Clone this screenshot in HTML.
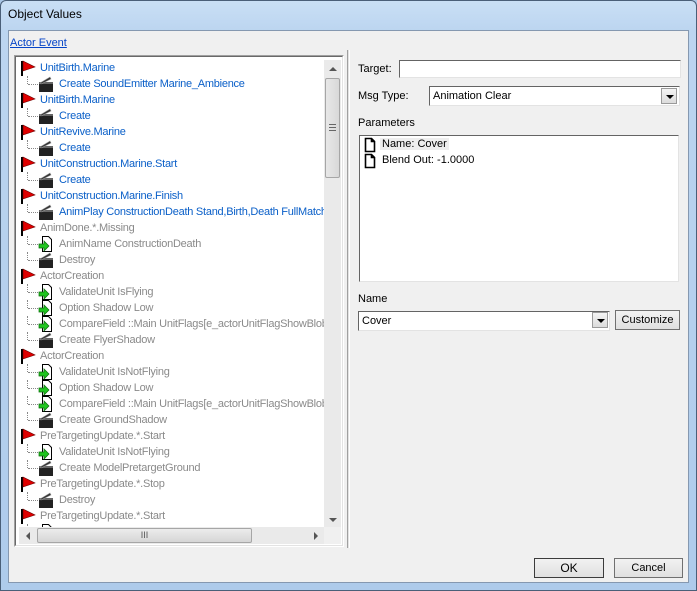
<!DOCTYPE html>
<html><head><meta charset="utf-8"><style>
*{box-sizing:border-box;margin:0;padding:0}
body{width:697px;height:591px;overflow:hidden;font-family:"Liberation Sans",sans-serif;font-size:11px;background:#a9c6e6;position:relative}
.abs{position:absolute}
#frame{left:0;top:0;width:697px;height:591px;border-radius:6px 6px 0 0;background:linear-gradient(#c9dff5,#bcd5f0 30px,#aecbeb);border:1px solid #4a5f78}
#client{left:8px;top:30px;width:681px;height:553px;background:#f0f0f0;border:1px solid #8598b0}
.lbl{color:#000;font-size:11px}
.row{position:absolute;left:0;height:16px;line-height:16px;white-space:nowrap;letter-spacing:-0.25px}
.b{color:#0a5fc8}.g{color:#8a8a8a}
.dv{position:absolute;border-left:1px dotted #888}
.dh{position:absolute;border-top:1px dotted #888}
.btn{position:absolute;background:linear-gradient(#f2f2f2,#e0e0e0);border:1px solid #707070;text-align:center;font-size:12px}
.dd{position:absolute;width:16px;height:16px;background:linear-gradient(#f4f4f4,#dcdcdc);border:1px solid #9a9a9a}
.dd:after{content:"";position:absolute;left:4px;top:6px;border-left:4px solid transparent;border-right:4px solid transparent;border-top:4px solid #000}
</style></head><body>
<div id="frame" class="abs"></div>
<div class="abs" style="left:8px;top:7px;font-size:12px;color:#000">Object Values</div>
<div id="client" class="abs"></div>
<div class="abs" style="left:10px;top:37px;color:#0645c8;text-decoration:underline">Actor Event</div>

<div class="abs" style="left:14px;top:55px;width:330px;height:492px;border:1px solid;border-color:#a0a0a0 #fff #fff #a0a0a0"></div>
<div class="abs" style="left:15px;top:56px;width:328px;height:490px;border:1px solid;border-color:#696969 #e3e3e3 #e3e3e3 #696969;background:#fff;overflow:hidden">
<div class="abs" style="left:4px;top:3px;width:304px;height:467px;overflow:hidden" id="tree"></div>
<div class="abs" style="left:308px;top:3px;width:17px;height:467px;background:#eaeaea"></div>
<div class="abs" style="left:313px;top:10px;border-left:4px solid transparent;border-right:4px solid transparent;border-bottom:4px solid #555"></div>
<div class="abs" style="left:309px;top:21px;width:15px;height:100px;background:linear-gradient(90deg,#e8e8e8,#d8d8d8);border:1px solid #a6a6a6;border-radius:2px"></div>
<div class="abs" style="left:313px;top:67px;width:7px;height:7px;border-top:1px solid #666;border-bottom:1px solid #666"><div style="margin-top:2px;border-top:1px solid #666"></div></div>
<div class="abs" style="left:313px;top:461px;border-left:4px solid transparent;border-right:4px solid transparent;border-top:4px solid #555"></div>
<div class="abs" style="left:3px;top:470px;width:305px;height:17px;background:#eaeaea"></div>
<div class="abs" style="left:10px;top:475px;border-top:4px solid transparent;border-bottom:4px solid transparent;border-right:4px solid #555"></div>
<div class="abs" style="left:21px;top:471px;width:215px;height:15px;background:linear-gradient(#ececec,#d6d6d6);border:1px solid #a6a6a6;border-radius:2px;text-align:center;line-height:12px;font-size:9px;color:#555">III</div>
<div class="abs" style="left:298px;top:475px;border-top:4px solid transparent;border-bottom:4px solid transparent;border-left:4px solid #555"></div>
<div class="abs" style="left:308px;top:470px;width:17px;height:17px;background:#f0f0f0"></div>
</div>
<div class="abs" style="left:347px;top:50px;width:3px;height:498px;border-left:1px solid #a0a0a0;border-right:1px solid #fff;background:#e3e3e3"></div>

<div class="abs lbl" style="left:358px;top:63px">Target:</div>
<div class="abs" style="left:399px;top:60px;width:282px;height:18px;background:#fff;border:1px solid;border-color:#646464 #e3e3e3 #e3e3e3 #646464"></div>
<div class="abs lbl" style="left:358px;top:90px">Msg Type:</div>
<div class="abs" style="left:429px;top:86px;width:251px;height:20px;background:#fff;border:1px solid;border-color:#646464 #e3e3e3 #e3e3e3 #646464;padding:3px 3px">Animation Clear</div>
<div class="dd" style="left:661px;top:88px"></div>
<div class="abs lbl" style="left:358px;top:117px">Parameters</div>
<div class="abs" style="left:359px;top:135px;width:320px;height:147px;background:#fff;border:1px solid;border-color:#646464 #e3e3e3 #e3e3e3 #646464"></div>
<svg class="abs" style="left:363px;top:137px" width="14" height="32"><path d="M2.5 1.5h6l3 3v10h-9z M8.5 1.5v3h3" fill="#fff" stroke="#000" stroke-width="1.6"/><path d="M2.5 17.5h6l3 3v10h-9z M8.5 17.5v3h3" fill="#fff" stroke="#000" stroke-width="1.6"/></svg>
<div class="abs" style="left:380px;top:138px;padding:0 2px;background:#eee">Name: Cover</div>
<div class="abs" style="left:382px;top:154px">Blend Out: -1.0000</div>
<div class="abs lbl" style="left:358px;top:293px">Name</div>
<div class="abs" style="left:358px;top:311px;width:252px;height:20px;background:#fff;border:1px solid;border-color:#646464 #e3e3e3 #e3e3e3 #646464;padding:3px 3px">Cover</div>
<div class="dd" style="left:592px;top:312px"></div>
<div class="btn" style="left:615px;top:310px;width:65px;height:20px;line-height:18px;font-size:11px">Customize</div>
<div class="btn" style="left:534px;top:558px;width:70px;height:20px;line-height:18px;border-color:#3c3c3c">OK</div>
<div class="btn" style="left:614px;top:558px;width:69px;height:20px;line-height:18px;font-size:11px">Cancel</div>

<script>
var rows=[
['F','UnitBirth.Marine','b'],['C','Create SoundEmitter Marine_Ambience','b'],
['F','UnitBirth.Marine','b'],['C','Create','b'],
['F','UnitRevive.Marine','b'],['C','Create','b'],
['F','UnitConstruction.Marine.Start','b'],['C','Create','b'],
['F','UnitConstruction.Marine.Finish','b'],['C','AnimPlay ConstructionDeath Stand,Birth,Death FullMatch','b'],
['F','AnimDone.*.Missing','g'],['G','AnimName ConstructionDeath','g'],['C','Destroy','g'],
['F','ActorCreation','g'],['G','ValidateUnit IsFlying','g'],['G','Option Shadow Low','g'],['G','CompareField ::Main UnitFlags[e_actorUnitFlagShowBlob]','g'],['C','Create FlyerShadow','g'],
['F','ActorCreation','g'],['G','ValidateUnit IsNotFlying','g'],['G','Option Shadow Low','g'],['G','CompareField ::Main UnitFlags[e_actorUnitFlagShowBlob]','g'],['C','Create GroundShadow','g'],
['F','PreTargetingUpdate.*.Start','g'],['G','ValidateUnit IsNotFlying','g'],['C','Create ModelPretargetGround','g'],
['F','PreTargetingUpdate.*.Stop','g'],['C','Destroy','g'],
['F','PreTargetingUpdate.*.Start','g'],['G','ValidateUnit IsFlying','g']];
var flag='<svg width="16" height="16" style="position:absolute;left:0;top:0"><rect x="1" y="1" width="2" height="15" fill="#000"/><path d="M3 1L15 7L3 11z" fill="#e00000" stroke="#600" stroke-width=".6"/></svg>';
var clap='<svg width="16" height="16" style="position:absolute;left:18px;top:0"><rect x="1" y="8" width="14" height="8" fill="#222"/><rect x="1" y="6" width="14" height="2" fill="#666"/><path d="M2 7L12 1L13 3L3 8z" fill="#333" stroke="#999" stroke-width=".6"/></svg>';
var grn='<svg width="16" height="16" style="position:absolute;left:18px;top:0"><path d="M4.5 .5h6l3 3v12h-9z" fill="#fff" stroke="#000"/><path d="M1 8h5v-3l5 5-5 5v-3H1z" fill="#1fc51f" stroke="#0a6a0a" stroke-width=".7"/></svg>';
var h='',t=document.getElementById('tree');
rows.forEach(function(r,i){var y=i*16;
 if(r[0]=='F'){h+='<div class="row" style="top:'+y+'px;width:400px"><div style="position:absolute;left:0;top:0">'+flag+'</div><span class="'+r[2]+'" style="position:absolute;left:20px">'+r[1]+'</span></div>';}
 else{h+='<div class="row" style="top:'+y+'px;width:400px"><div class="dv" style="left:7px;top:0;height:8px"></div><div class="dh" style="left:8px;top:8px;width:10px"></div><div style="position:absolute;left:0;top:0">'+(r[0]=='C'?clap:grn)+'</div><span class="'+r[2]+'" style="position:absolute;left:39px">'+r[1]+'</span></div>';}
});
t.innerHTML=h;
</script>
</body></html>
